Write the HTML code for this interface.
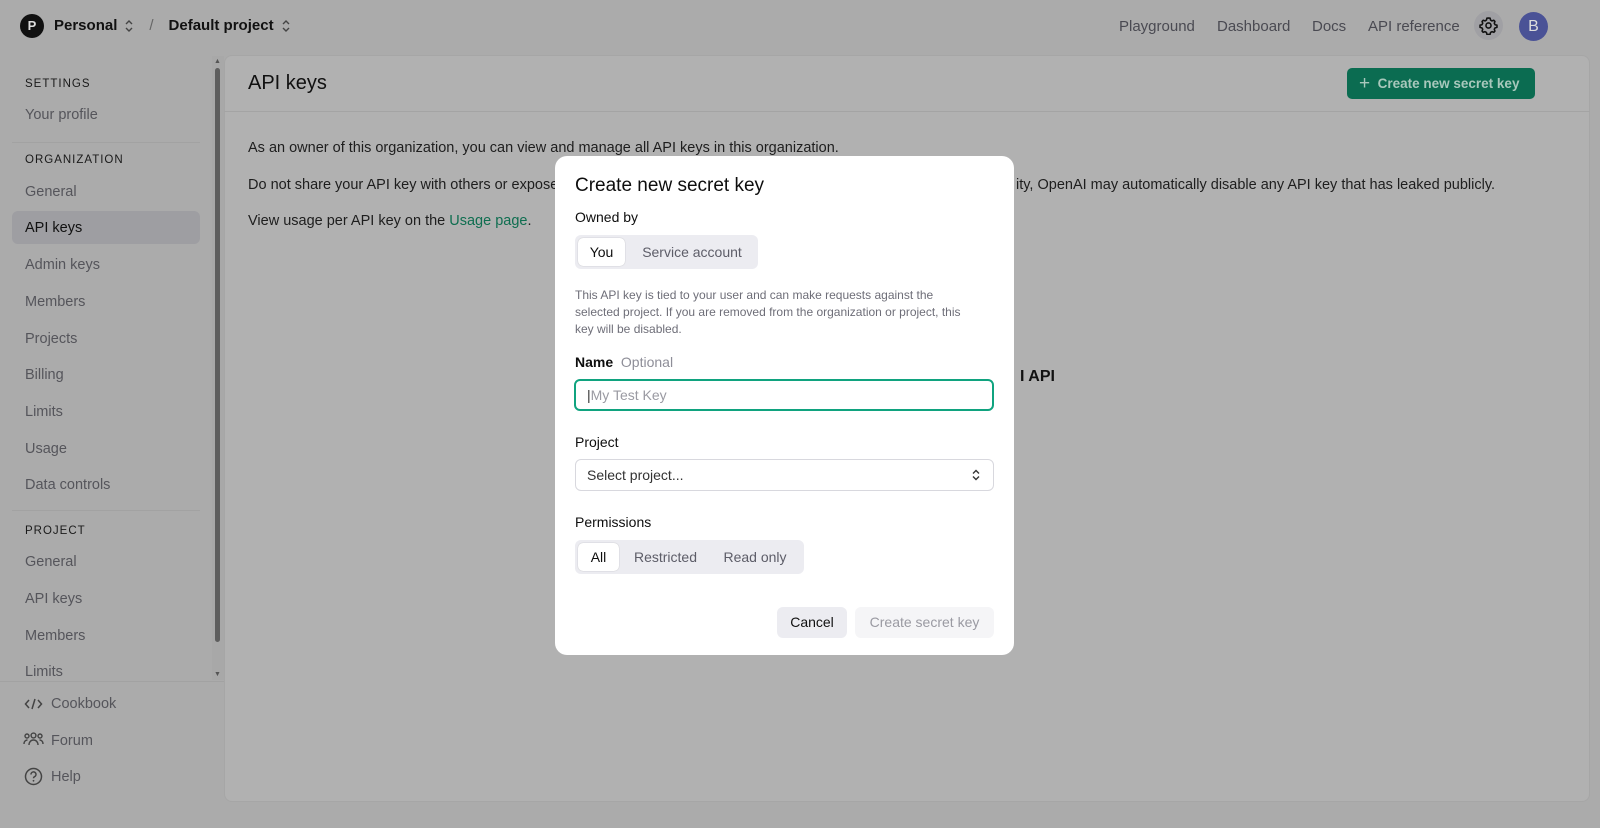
<!DOCTYPE html>
<html><head><meta charset="utf-8"><style>
*{box-sizing:border-box;margin:0;padding:0}
body{width:1600px;height:828px;overflow:hidden;background:#ababab;font-family:"Liberation Sans",sans-serif;color:#0e0e0e;position:relative}
.abs{position:absolute}
.nav a{position:absolute;top:18px;font-size:15px;color:#4a4a52}
.sb{position:absolute;left:25px;font-size:14.5px;color:#55555b}
.sh{position:absolute;left:25px;font-size:11.5px;letter-spacing:1px;color:#1a1a1a}
.hr{position:absolute;left:12px;width:188px;height:1px;background:#a2a2a2}
.modal{position:absolute;left:555px;top:156px;width:459px;height:499px;background:#fff;border-radius:12px}
.m{position:absolute;font-size:14px}
.seg{position:absolute;background:#ececf1;border-radius:6px;height:34px}
.seg span{position:absolute;top:3px;height:28px;line-height:28px;font-size:14px;color:#5d5d68;text-align:center}
.seg .on{background:#fff;border-radius:5px;color:#0e0e0e;box-shadow:0 0 1px rgba(0,0,0,.3)}
.crumb{position:absolute;top:17px;font-size:15px;font-weight:bold;color:#111;display:flex;align-items:center;gap:7px;white-space:nowrap}
</style></head><body>
<div class="abs" style="left:20px;top:14px;width:24px;height:24px;border-radius:50%;background:#111;color:#ddd;font-size:13px;font-weight:bold;text-align:center;line-height:24px">P</div>
<div class="crumb" style="left:54px">Personal<svg width="10" height="14" viewBox="0 0 10 14"><path d="M2 5l3-3 3 3M2 9l3 3 3-3" fill="none" stroke="#444" stroke-width="1.4"/></svg><span style="font-weight:normal;color:#666;margin-left:8px">/</span><span style="margin-left:8px">Default project</span><svg width="10" height="14" viewBox="0 0 10 14"><path d="M2 5l3-3 3 3M2 9l3 3 3-3" fill="none" stroke="#444" stroke-width="1.4"/></svg></div>
<div class="nav"><a style="left:1119px">Playground</a><a style="left:1217px">Dashboard</a><a style="left:1312px">Docs</a><a style="left:1368px">API reference</a></div>
<div class="abs" style="left:1474px;top:11px;width:29px;height:29px;border-radius:50%;background:#a0a0a4"></div>
<svg class="abs" style="left:1479px;top:16px" width="19" height="19" viewBox="0 0 24 24"><path d="M12 2.5l2 .3.6 2.4 1.8 1 2.3-.8 1.4 1.5-.8 2.3 1 1.8 2.4.6v2.8l-2.4.6-1 1.8.8 2.3-1.4 1.5-2.3-.8-1.8 1-.6 2.4h-4l-.6-2.4-1.8-1-2.3.8-1.4-1.5.8-2.3-1-1.8-2.4-.6v-2.8l2.4-.6 1-1.8-.8-2.3 1.4-1.5 2.3.8 1.8-1 .6-2.4z" fill="none" stroke="#111" stroke-width="2" stroke-linejoin="round"/><circle cx="12" cy="12" r="3.2" fill="none" stroke="#111" stroke-width="2"/></svg>
<div class="abs" style="left:1519px;top:12px;width:29px;height:29px;border-radius:50%;background:#4a5296;color:#ddd;font-size:16px;text-align:center;line-height:29px">B</div>

<div class="sh" style="top:78px">SETTINGS</div>
<div class="sb" style="top:107px">Your profile</div>
<div class="hr" style="top:142px"></div>
<div class="sh" style="top:154px">ORGANIZATION</div>
<div class="sb" style="top:184px">General</div>
<div class="abs" style="left:12px;top:211px;width:188px;height:33px;background:#9e9ea2;border-radius:6px"></div>
<div class="sb" style="top:220px;color:#111">API keys</div>
<div class="sb" style="top:257px">Admin keys</div>
<div class="sb" style="top:294px">Members</div>
<div class="sb" style="top:331px">Projects</div>
<div class="sb" style="top:367px">Billing</div>
<div class="sb" style="top:404px">Limits</div>
<div class="sb" style="top:441px">Usage</div>
<div class="sb" style="top:477px">Data controls</div>
<div class="hr" style="top:510px"></div>
<div class="sh" style="top:525px">PROJECT</div>
<div class="sb" style="top:554px">General</div>
<div class="sb" style="top:591px">API keys</div>
<div class="sb" style="top:628px">Members</div>
<div class="sb" style="top:664px">Limits</div>
<div class="abs" style="left:212px;top:56px;width:12px;height:624px;background:#a8a8a8"></div>
<div class="abs" style="left:215px;top:68px;width:5px;height:574px;background:#5e5e5e;border-radius:3px"></div>
<div class="abs" style="left:214px;top:58px;font-size:7px;color:#555">▲</div>
<div class="abs" style="left:214px;top:671px;font-size:7px;color:#555">▼</div>
<div class="abs" style="left:0;top:681px;width:224px;height:1px;background:#a2a2a2"></div>
<svg class="abs" style="left:24px;top:697px" width="19" height="14" viewBox="0 0 19 14"><path d="M5 3L1.5 7 5 11M14 3l3.5 4L14 11M11 2L8 12" fill="none" stroke="#444" stroke-width="1.5"/></svg>
<div class="sb" style="top:696px;left:51px">Cookbook</div>
<svg class="abs" style="left:23px;top:732px" width="21" height="14" viewBox="0 0 21 14"><circle cx="4" cy="4" r="2" fill="none" stroke="#444" stroke-width="1.4"/><circle cx="10.5" cy="3.5" r="2.4" fill="none" stroke="#444" stroke-width="1.4"/><circle cx="17" cy="4" r="2" fill="none" stroke="#444" stroke-width="1.4"/><path d="M1 12c0-3 2-4 3.5-4M6 13c0-3 2-5 4.5-5s4.5 2 4.5 5M20 12c0-3-2-4-3.5-4" fill="none" stroke="#444" stroke-width="1.4"/></svg>
<div class="sb" style="top:733px;left:51px">Forum</div>
<svg class="abs" style="left:24px;top:767px" width="19" height="19" viewBox="0 0 19 19"><circle cx="9.5" cy="9.5" r="8" fill="none" stroke="#444" stroke-width="1.5"/><path d="M7 7.5a2.5 2.5 0 1 1 3.5 2.2c-.8.4-1 .9-1 1.6" fill="none" stroke="#444" stroke-width="1.5"/><circle cx="9.5" cy="13.8" r=".9" fill="#444"/></svg>
<div class="sb" style="top:769px;left:51px">Help</div>

<div class="abs" style="left:224px;top:55px;width:1366px;height:747px;background:#b1b1b1;border-radius:8px;border:1px solid #a6a6a6"></div>
<div class="abs" style="left:224px;top:111px;width:1366px;height:1px;background:#a4a4a4"></div>
<div class="abs" style="left:248px;top:72px;font-size:20px;color:#111">API keys</div>
<div class="abs" style="left:1347px;top:68px;width:188px;height:31px;background:#0b6c51;border-radius:5px;color:#a8c8bc;font-size:13.5px;font-weight:bold;line-height:31px;padding-left:12px;white-space:nowrap"><span style="font-weight:normal;font-size:19px;vertical-align:-1px">+</span>&nbsp; Create new secret key</div>
<div class="abs" style="left:248px;top:140px;font-size:14.5px;color:#1e1e1e">As an owner of this organization, you can view and manage all API keys in this organization.</div>
<div class="abs" style="left:248px;top:177px;font-size:14.5px;color:#1e1e1e">Do not share your API key with others or expose i</div>
<div class="abs" style="left:1016px;top:177px;font-size:14.5px;color:#1e1e1e">ity, OpenAI may automatically disable any API key that has leaked publicly.</div>
<div class="abs" style="left:248px;top:213px;font-size:14.5px;color:#1e1e1e">View usage per API key on the <span style="color:#0f6e50">Usage page</span>.</div>
<div class="abs" style="left:1020px;top:368px;font-size:16px;color:#111;font-weight:bold">I API</div>

<div class="modal">
<div class="m" style="left:20px;top:19px;font-size:19px">Create new secret key</div>
<div class="m" style="left:20px;top:53px">Owned by</div>
<div class="seg" style="left:20px;top:79px;width:183px"><span class="on" style="left:3px;width:47px">You</span><span style="left:54px;width:126px">Service account</span></div>
<div class="m" style="left:20px;top:131px;width:395px;font-size:12px;line-height:17px;color:#6e6e78">This API key is tied to your user and can make requests against the selected project. If you are removed from the organization or project, this key will be disabled.</div>
<div class="m" style="left:20px;top:198px"><b style="font-weight:bold">Name</b> &nbsp;<span style="color:#8e8e98">Optional</span></div>
<div class="m" style="left:19px;top:223px;width:420px;height:32px;border:2px solid #10a37f;border-radius:6px;padding-left:11px;line-height:28px;color:#9a9aa2"><span style="color:#333">|</span>My Test Key</div>
<div class="m" style="left:20px;top:278px">Project</div>
<div class="m" style="left:20px;top:303px;width:419px;height:32px;border:1px solid #d8d8de;border-radius:6px;padding-left:11px;line-height:30px;color:#333">Select project...</div>
<svg class="abs" style="left:416px;top:313px" width="10" height="12" viewBox="0 0 10 12"><path d="M2 4.5l3-3 3 3M2 7.5l3 3 3-3" fill="none" stroke="#333" stroke-width="1.4"/></svg>
<div class="m" style="left:20px;top:358px">Permissions</div>
<div class="seg" style="left:20px;top:384px;width:229px"><span class="on" style="left:3px;width:41px">All</span><span style="left:48px;width:85px">Restricted</span><span style="left:133px;width:94px">Read only</span></div>
<div class="m" style="left:222px;top:451px;width:70px;height:31px;background:#ececf1;border-radius:6px;text-align:center;line-height:31px;color:#111">Cancel</div>
<div class="m" style="left:300px;top:451px;width:139px;height:31px;background:#f5f5f7;border-radius:6px;text-align:center;line-height:31px;color:#9a9aa2">Create secret key</div>
</div>
</body></html>
